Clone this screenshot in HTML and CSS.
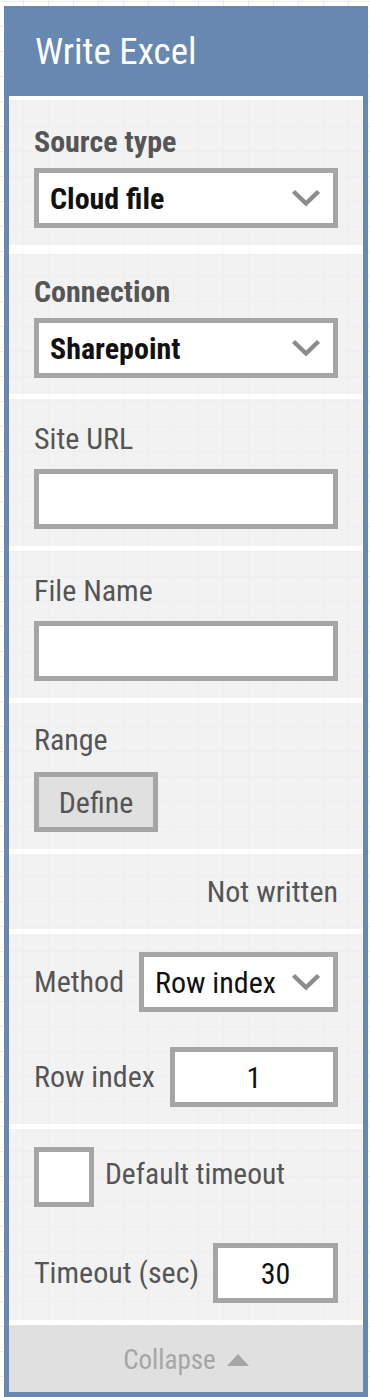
FILE: index.html
```html
<!DOCTYPE html>
<html lang="en">
<head>
<meta charset="utf-8">
<title>Write Excel</title>
<link rel="stylesheet" href="styles.css">
</head>
<body>
<div class="panel">
  <div class="panel-header">Write Excel</div>
  <div class="panel-body">
    <div class="section sec-source">
      <div class="label label-bold">Source type</div>
      <div class="select select-bold">
        <span class="select-value">Cloud file</span>
        <svg class="chevron" viewBox="0 0 30 18" width="30" height="18"><path d="M2.5 2.5 L15 14.5 L27.5 2.5" fill="none" stroke="#8c8c8c" stroke-width="4.5"/></svg>
      </div>
    </div>
    <div class="section sec-connection">
      <div class="label label-bold">Connection</div>
      <div class="select select-bold">
        <span class="select-value">Sharepoint</span>
        <svg class="chevron" viewBox="0 0 30 18" width="30" height="18"><path d="M2.5 2.5 L15 14.5 L27.5 2.5" fill="none" stroke="#8c8c8c" stroke-width="4.5"/></svg>
      </div>
    </div>
    <div class="section sec-input">
      <div class="label">Site URL</div>
      <div class="input"></div>
    </div>
    <div class="section sec-input">
      <div class="label">File Name</div>
      <div class="input"></div>
    </div>
    <div class="section sec-range">
      <div class="label">Range</div>
      <div class="button">Define</div>
    </div>
    <div class="section sec-status">
      <div class="status">Not written</div>
    </div>
    <div class="section sec-rows sec-method">
      <div class="row">
        <div class="label">Method</div>
        <div class="select select-method">
          <span class="select-value">Row index</span>
          <svg class="chevron" viewBox="0 0 30 18" width="30" height="18"><path d="M2.5 2.5 L15 14.5 L27.5 2.5" fill="none" stroke="#8c8c8c" stroke-width="4.5"/></svg>
        </div>
      </div>
      <div class="row">
        <div class="label">Row index</div>
        <div class="input input-value input-rowindex">1</div>
      </div>
    </div>
    <div class="section sec-rows sec-timeout">
      <div class="row row-check">
        <div class="checkbox"></div>
        <div class="label label-check">Default timeout</div>
      </div>
      <div class="row">
        <div class="label">Timeout (sec)</div>
        <div class="input input-value input-timeout">30</div>
      </div>
    </div>
    <div class="collapse">
      <span class="collapse-text">Collapse</span>
      <svg class="triangle" viewBox="0 0 22 12" width="22" height="12"><path d="M0 12 L11 0 L22 12 Z" fill="#a5a5a5"/></svg>
    </div>
  </div>
</div>
</body>
</html>
```

FILE: styles.css
```css
* {
  box-sizing: border-box;
}

html, body {
  margin: 0;
  padding: 0;
}

body {
  height: 1397px;
  overflow: hidden;
  background-color: #ffffff;
  background-image:
    linear-gradient(to right, #ececec 1px, transparent 1px),
    linear-gradient(to bottom, #ececec 1px, transparent 1px);
  background-size: 25px 25px;
  background-position: 23px 1px;
  font-family: "Roboto Condensed", Roboto, "Liberation Sans", sans-serif;
}

.panel {
  margin: 6px 0 0 4px;
  width: 364px;
  height: 1391px;
  border: 5px solid #6788b1;
  display: flex;
  flex-direction: column;
}

.panel-header {
  height: 85px;
  flex: none;
  background: #6788b1;
  color: #ffffff;
  font-size: 37px;
  line-height: 44px;
  padding: 19px 0 0 26px;
}

.panel-body {
  flex: 1;
  display: flex;
  flex-direction: column;
  gap: 5px;
  padding-top: 4px;
  background: rgba(255, 255, 255, 0.8);
}

.section {
  background: rgba(0, 0, 0, 0.05);
  padding: 0 25px;
  display: flex;
  flex-direction: column;
  align-items: flex-start;
}

.label {
  font-size: 30px;
  line-height: 34px;
  color: #555555;
  white-space: nowrap;
}

.label-bold {
  font-weight: 700;
}

.sec-source {
  padding-top: 25px;
  padding-bottom: 17px;
}

.sec-source .select,
.sec-connection .select {
  margin-top: 9px;
}

.sec-connection {
  margin-top: 4px;
  padding-top: 21px;
  padding-bottom: 16px;
}

.sec-input {
  padding-top: 23px;
  padding-bottom: 17px;
}

.sec-input .input {
  margin-top: 13px;
}

.sec-range {
  padding-top: 20px;
  padding-bottom: 17px;
}

.sec-range .button {
  margin-top: 15px;
}

.select {
  width: 304px;
  height: 60px;
  border: 5px solid #a5a5a5;
  background: #ffffff;
  display: flex;
  align-items: center;
  justify-content: space-between;
  padding: 0 12px 0 11px;
}

.select-value {
  font-size: 30px;
  color: #111111;
  white-space: nowrap;
}

.select-bold .select-value {
  font-weight: 700;
}

.chevron {
  display: block;
  flex: none;
}

.input {
  width: 304px;
  height: 60px;
  border: 5px solid #a5a5a5;
  background: #ffffff;
}

.input-value {
  display: flex;
  align-items: center;
  justify-content: center;
  font-size: 30px;
  color: #111111;
}

.button {
  width: 124px;
  height: 60px;
  border: 5px solid #a5a5a5;
  background: #e0e0e0;
  display: flex;
  align-items: center;
  justify-content: center;
  font-size: 30px;
  color: #555555;
}

.sec-status {
  padding-top: 21px;
  padding-bottom: 20px;
  align-items: flex-end;
}

.status {
  font-size: 30px;
  line-height: 34px;
  color: #555555;
  white-space: nowrap;
}

.sec-rows {
  align-items: stretch;
  padding-top: 18px;
  padding-bottom: 17px;
}

.sec-method {
  gap: 35px;
}

.sec-timeout {
  gap: 36px;
}

.row {
  height: 60px;
  display: flex;
  align-items: center;
  justify-content: space-between;
}

.select-method {
  width: 199px;
}

.input-rowindex {
  width: 168px;
}

.input-timeout {
  width: 125px;
}

.row-check {
  justify-content: flex-start;
  gap: 11px;
}

.checkbox {
  width: 60px;
  height: 60px;
  flex: none;
  border: 5px solid #a5a5a5;
  background: #ffffff;
}

.label-check {
  margin-bottom: 6px;
  font-size: 29.5px;
}

.collapse {
  flex: 1;
  background: #e0e0e0;
  display: flex;
  align-items: center;
  justify-content: center;
  gap: 11px;
  padding-top: 3px;
}

.collapse-text {
  font-size: 27px;
  color: #a5a5a5;
}

.triangle {
  display: block;
}
```
